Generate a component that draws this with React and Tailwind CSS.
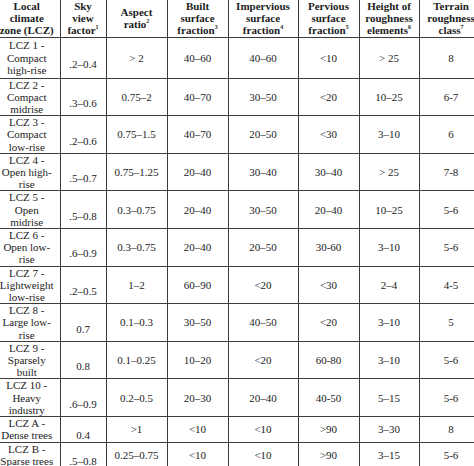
const head = [
  ['Local', 'climate', 'zone (LCZ)'],
  ['Sky', 'view', 'factor', '1'],
  ['Aspect', 'ratio', '2'],
  ['Built', 'surface', 'fraction', '3'],
  ['Impervious', 'surface', 'fraction', '4'],
  ['Pervious', 'surface', 'fraction', '5'],
  ['Height of', 'roughness', 'elements', '6'],
  ['Terrain', 'roughness', 'class', '7'],
];

const rows = [
  [['LCZ 1 -', 'Compact', 'high-rise'], '.2–0.4', '> 2', '40–60', '40–60', '<10', '> 25', '8'],
  [['LCZ 2 -', 'Compact', 'midrise'], '.3–0.6', '0.75–2', '40–70', '30–50', '<20', '10–25', '6-7'],
  [['LCZ 3 -', 'Compact', 'low-rise'], '.2–0.6', '0.75–1.5', '40–70', '20–50', '<30', '3–10', '6'],
  [['LCZ 4 -', 'Open high-', 'rise'], '.5–0.7', '0.75–1.25', '20–40', '30–40', '30–40', '> 25', '7-8'],
  [['LCZ 5 -', 'Open', 'midrise'], '.5–0.8', '0.3–0.75', '20–40', '30–50', '20–40', '10–25', '5-6'],
  [['LCZ 6 -', 'Open low-', 'rise'], '.6–0.9', '0.3–0.75', '20–40', '20–50', '30-60', '3–10', '5-6'],
  [['LCZ 7 -', 'Lightweight', 'low-rise'], '.2–0.5', '1–2', '60–90', '<20', '<30', '2–4', '4-5'],
  [['LCZ 8 -', 'Large low-', 'rise'], '0.7', '0.1–0.3', '30–50', '40–50', '<20', '3–10', '5'],
  [['LCZ 9 -', 'Sparsely', 'built'], '0.8', '0.1–0.25', '10–20', '<20', '60-80', '3–10', '5-6'],
  [['LCZ 10 -', 'Heavy', 'industry'], '.6–0.9', '0.2–0.5', '20–30', '20–40', '40-50', '5–15', '5-6'],
  [['LCZ A -', 'Dense trees'], '0.4', '>1', '<10', '<10', '>90', '3–30', '8'],
  [['LCZ B -', 'Sparse trees'], '.5–0.8', '0.25–0.75', '<10', '<10', '>90', '3–15', '5-6'],
];

const widths = ['w-[66px]', 'w-[46px]', 'w-[61px]', 'w-[61px]', 'w-[70px]', 'w-[61px]', 'w-[60px]', 'w-[64px]'];

function HeadCell({ parts, first }) {
  const hasSup = parts.length > 1 && /^\d$/.test(parts[parts.length - 1]);
  const lines = hasSup ? parts.slice(0, -1) : parts;
  const sup = hasSup ? parts[parts.length - 1] : null;
  return (
    <th className={`border border-[#3c3c3c] border-t-0 p-0 text-center font-bold align-middle ${first ? 'border-l-0' : ''}`}>
      {lines.map((l, i) => (
        <div key={i} className="whitespace-nowrap">
          {l}
          {sup && i === lines.length - 1 && <sup className="text-[6px] top-[-5px]">{sup}</sup>}
        </div>
      ))}
    </th>
  );
}

export default function App() {
  return (
    <div className="w-[474px] h-[466px] overflow-hidden bg-white text-[#1c1c1c] font-['Liberation_Serif','Times_New_Roman',serif]">
      <table className="table-fixed border-collapse ml-[-6px] w-[489px] text-[11px] leading-[12.2px]">
        <colgroup>
          {widths.map((w, i) => (
            <col key={i} className={w} />
          ))}
        </colgroup>
        <thead>
          <tr className="h-[37px]">
            {head.map((h, i) => (
              <HeadCell key={i} parts={h} first={i === 0} />
            ))}
          </tr>
        </thead>
        <tbody>
          {rows.map((r, ri) => (
            <tr key={ri} className={ri === 0 ? 'h-[41px]' : ''}>
              <td className="border border-[#3c3c3c] border-l-0 p-0 text-center align-middle">
                {r[0].map((l, i) => (
                  <div key={i} className="whitespace-nowrap">{l}</div>
                ))}
              </td>
              <td className="border border-[#3c3c3c] p-0 text-center align-middle">
                <div>&nbsp;</div>
                <div className="whitespace-nowrap">{r[1]}</div>
              </td>
              {r.slice(2).map((v, i) => (
                <td key={i} className="border border-[#3c3c3c] p-0 text-center align-middle whitespace-nowrap">
                  {v}
                </td>
              ))}
            </tr>
          ))}
        </tbody>
      </table>
    </div>
  );
}
